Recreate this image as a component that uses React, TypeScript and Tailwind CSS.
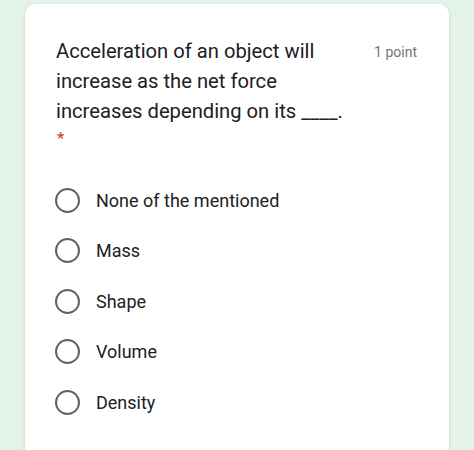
const options = ["None of the mentioned", "Mass", "Shape", "Volume", "Density"];

function Radio() {
  return <div className="w-[25px] h-[25px] rounded-full border-[2.5px] border-[#5f6368] shrink-0" />;
}

export default function App() {
  return (
    <div className="w-[474px] h-[450px] overflow-hidden bg-[#e4f3e7] pt-[4px] pl-[25px] font-['Roboto',sans-serif]">
      <div className="w-[424px] h-[470px] bg-white rounded-t-[10px] shadow-[0_1px_3px_rgba(0,0,0,0.15)] px-[31px] pt-[32px]">
        <div className="flex justify-between">
          <div className="text-[20.2px] leading-[30px] text-[#202124]">
            Acceleration of an object will
            <br />
            increase as the net force
            <br />
            increases depending on its ____.
          </div>
          <div className="text-[14px] leading-[30px] text-[#70757a] pr-[1px] pt-[1px]">1 point</div>
        </div>
        <div className="text-[#d93025] text-[17px] leading-[20px] pl-[1px] mt-[2px]">*</div>
        <div className="mt-[27px] flex flex-col">
          {options.map((o) => (
            <div key={o} className="flex items-center h-[50.5px] gap-[16px] -ml-[1px]">
              <Radio />
              <span className="text-[18px] text-[#202124]">{o}</span>
            </div>
          ))}
        </div>
      </div>
    </div>
  );
}
